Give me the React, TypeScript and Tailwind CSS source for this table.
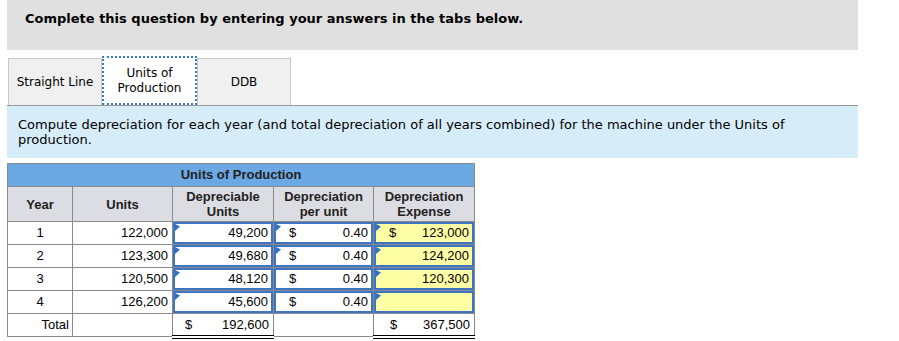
import React from 'react';

const verdana = { fontFamily: '"DejaVu Sans", Verdana, sans-serif' };

interface Row {
  year: string;
  units: string;
  dep: string;
  rate: string;
  expense: string;
  rateFlag: boolean;
  expDollar: boolean;
}

const rows: Row[] = [
  { year: '1', units: '122,000', dep: '49,200', rate: '0.40', expense: '123,000', rateFlag: true, expDollar: true },
  { year: '2', units: '123,300', dep: '49,680', rate: '0.40', expense: '124,200', rateFlag: true, expDollar: false },
  { year: '3', units: '120,500', dep: '48,120', rate: '0.40', expense: '120,300', rateFlag: false, expDollar: false },
  { year: '4', units: '126,200', dep: '45,600', rate: '0.40', expense: '', rateFlag: false, expDollar: false },
];

const Flag = () => (
  <svg className="absolute left-0 top-0" width="5" height="7" viewBox="0 0 5 7">
    <polygon points="0,0 5,2.5 0,7" fill="#2f6fc8" />
  </svg>
);

const InputCell: React.FC<{ flag?: boolean; yellow?: boolean; dollar?: boolean; value: string }> = ({ flag, yellow, dollar, value }) => (
  <td className="p-0 border border-[#8a8a8a]">
    <div className={`relative h-[22px] flex items-center justify-between pl-[13px] pr-[3px] border-2 border-[#3f74c2] ${yellow ? 'bg-[#ffffa6]' : 'bg-white'}`}>
      {flag && <Flag />}
      <span>{dollar ? '$' : ''}</span>
      <span>{value}</span>
    </div>
  </td>
);

export default function App() {
  return (
    <div className="w-[899px] h-[341px] bg-white pl-[7px] text-black overflow-hidden">
      <div className="w-[851px] h-[50px] bg-[#e0e0e0] pl-[18px] pt-[9px] text-[13px] font-bold" style={verdana}>
        Complete this question by entering your answers in the tabs below.
      </div>

      <div className="flex items-end h-[55px] pt-[6px] pl-[1px] text-[12px]" style={verdana}>
        <div className="w-[94px] h-[47px] bg-[#f0f0f0] border border-b-0 border-[#c6c6c6] flex items-center justify-center">
          Straight Line
        </div>
        <div className="w-[95px] h-[49px] bg-white border-2 border-dotted border-[#3a78cc] flex items-center justify-center text-center leading-[15px]">
          Units of<br />Production
        </div>
        <div className="w-[94px] h-[47px] bg-[#f0f0f0] border border-b-0 border-[#c6c6c6] flex items-center justify-center">
          DDB
        </div>
      </div>

      <div className="w-[851px] h-[53px] bg-[#d6ecf9] border-t border-[#9a9a9a] pl-[11px] pt-[11px] text-[13px] leading-[15px]" style={verdana}>
        Compute depreciation for each year (and total depreciation of all years combined) for the machine under the Units of production.
      </div>

      <table className="mt-[5px] w-[467px] table-fixed border-collapse text-[13px]" style={{ fontFamily: '"Liberation Sans", Arial, sans-serif' }}>
        <colgroup>
          <col className="w-[65px]" />
          <col className="w-[100px]" />
          <col className="w-[101px]" />
          <col className="w-[100px]" />
          <col className="w-[101px]" />
        </colgroup>
        <thead>
          <tr className="h-[23px] bg-[#6ca8e4]">
            <th colSpan={5} className="border border-[#8a8a8a] font-bold text-[#222]">Units of Production</th>
          </tr>
          <tr className="h-[35px] bg-[#dcdde3] leading-[15px] text-[#222]">
            <th className="border border-[#8a8a8a] font-bold">Year</th>
            <th className="border border-[#8a8a8a] font-bold">Units</th>
            <th className="border border-[#8a8a8a] font-bold">Depreciable<br />Units</th>
            <th className="border border-[#8a8a8a] font-bold">Depreciation<br />per unit</th>
            <th className="border border-[#8a8a8a] font-bold">Depreciation<br />Expense</th>
          </tr>
        </thead>
        <tbody>
          {rows.map((r) => (
            <tr key={r.year} className="h-[23px]">
              <td className="border border-[#8a8a8a] text-center">{r.year}</td>
              <td className="border border-[#8a8a8a] text-right pr-[4px]">{r.units}</td>
              <InputCell flag value={r.dep} />
              <InputCell flag={r.rateFlag} dollar value={r.rate} />
              <InputCell flag yellow dollar={r.expDollar} value={r.expense} />
            </tr>
          ))}
          <tr className="h-[23px]">
            <td className="border border-[#8a8a8a] text-right pr-[3px]">Total</td>
            <td className="border border-[#8a8a8a]"></td>
            <td className="border border-[#8a8a8a] border-b-[4px] border-b-black border-double px-[4px]">
              <div className="flex justify-between pl-[8px]"><span>$</span><span>192,600</span></div>
            </td>
            <td className="border border-[#8a8a8a]"></td>
            <td className="border border-[#8a8a8a] border-b-[4px] border-b-black border-double px-[4px]">
              <div className="flex justify-between pl-[12px]"><span>$</span><span>367,500</span></div>
            </td>
          </tr>
        </tbody>
      </table>
    </div>
  );
}
